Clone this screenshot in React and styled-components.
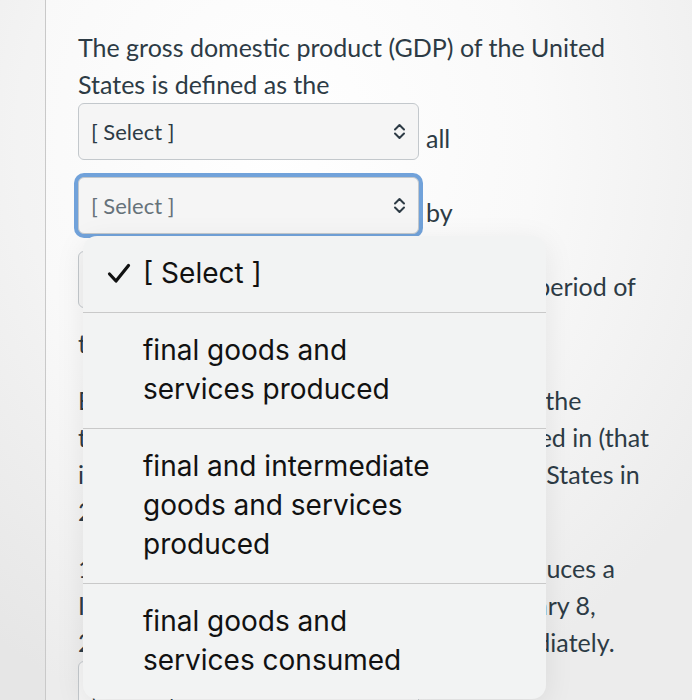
import React from 'react'
import styled, { createGlobalStyle } from 'styled-components'

const GlobalStyle = createGlobalStyle`
  html, body {
    margin: 0;
    padding: 0;
  }
  body {
    font-family: Lato, "Open Sans", sans-serif;
    color: #2d3b45;
    background: radial-gradient(ellipse 75% 85% at 40% 20%, #ffffff 0%, #f9f9f9 50%, #ececec 100%);
  }
`

const Page = styled.div`
  position: relative;
  display: flex;
  width: 692px;
  height: 700px;
  overflow: hidden;
`

const Gutter = styled.div`
  width: 45px;
  flex-shrink: 0;
  border-right: 1px solid #c9c9c9;
  background: rgba(0, 0, 0, 0.025);
`

const Content = styled.div`
  flex: 1;
  padding: 29px 0 0 32px;
`

const Line = styled.div`
  font-size: 25px;
  line-height: 37px;
  white-space: nowrap;
`

const Para = styled.div`
  margin-top: 20px;
`

const SelectRow = styled.div`
  display: flex;
  align-items: flex-end;
  gap: 7px;
  margin-bottom: 17px;
`

const Label = styled.span`
  font-size: 25px;
  line-height: 37px;
  padding-bottom: 3px;
  white-space: nowrap;
`

const SelectBox = styled.div`
  box-sizing: border-box;
  width: 341px;
  height: 57px;
  flex-shrink: 0;
  display: flex;
  align-items: center;
  justify-content: space-between;
  padding: 0 12px;
  border: 1px solid #c3c8cc;
  border-radius: 6px;
  background: #f5f5f5;
  font-size: 22px;
  color: ${p => (p.$focused ? '#66727a' : '#2d3b45')};
  box-shadow: ${p => (p.$focused ? '0 0 0 4px #71a2da' : 'none')};
`

const Arrows = styled.span`
  display: flex;
  color: #2d3b45;
`

const Menu = styled.div`
  position: absolute;
  left: 83px;
  top: 236px;
  width: 463px;
  border-radius: 14px;
  background: #f2f3f3;
  box-shadow: 0 6px 30px rgba(0, 0, 0, 0.08);
  font-family: Inter, "Noto Sans", sans-serif;
  color: #111;
`

const Option = styled.div`
  position: relative;
  padding: 18px 20px 19px 60px;
  font-size: 28px;
  line-height: 39px;
  & + & {
    border-top: 1px solid #c9c9c9;
  }
`

const Check = styled.svg`
  position: absolute;
  left: 24px;
  top: 27px;
`

function Chevrons() {
  return (
    <svg width="13" height="17" viewBox="0 0 13 17" fill="none">
      <path d="M2 6.5 L6.5 2 L11 6.5" stroke="currentColor" strokeWidth="2" strokeLinecap="round" strokeLinejoin="round" />
      <path d="M2 10.5 L6.5 15 L11 10.5" stroke="currentColor" strokeWidth="2" strokeLinecap="round" strokeLinejoin="round" />
    </svg>
  )
}

function Select({ focused }) {
  return (
    <SelectBox $focused={focused}>
      <span>[ Select ]</span>
      <Arrows>
        <Chevrons />
      </Arrows>
    </SelectBox>
  )
}

const options = [
  ['[ Select ]'],
  ['final goods and', 'services produced'],
  ['final and intermediate', 'goods and services', 'produced'],
  ['final goods and', 'services consumed'],
]

export default function App() {
  return (
    <>
      <GlobalStyle />
      <Page>
        <Gutter />
        <Content>
          <Line>The gross domestic product (GDP) of the United</Line>
          <Line>States is defined as the</Line>
          <SelectRow>
            <Select />
            <Label>all</Label>
          </SelectRow>
          <SelectRow>
            <Select focused />
            <Label>by</Label>
          </SelectRow>
          <SelectRow>
            <Select />
            <Label>in a given period of</Label>
          </SelectRow>
          <Line>time.</Line>
          <Para>
            <Line>Explain whether every good will be part of the</Line>
            <Line>the total of the nation where it got produced in (that</Line>
            <Line>is, inside the territory of) the entire United States in</Line>
            <Line>2019.</Line>
          </Para>
          <Para>
            <Line>1. In December 2019, a bicycle maker produces a</Line>
            <Line>It's then sold, to a young shopper, on January 8,</Line>
            <Line>2020, and the shopper rides it away immediately.</Line>
          </Para>
          <SelectRow>
            <Select />
          </SelectRow>
        </Content>
        <Menu>
          {options.map((lines, i) => (
            <Option key={i}>
              {i === 0 && (
                <Check width="24" height="21" viewBox="0 0 24 21" fill="none">
                  <path d="M2.5 11 L9 18 L21.5 2.5" stroke="#111" strokeWidth="3.2" strokeLinecap="round" strokeLinejoin="round" />
                </Check>
              )}
              {lines.map(l => (
                <div key={l}>{l}</div>
              ))}
            </Option>
          ))}
        </Menu>
      </Page>
    </>
  )
}
